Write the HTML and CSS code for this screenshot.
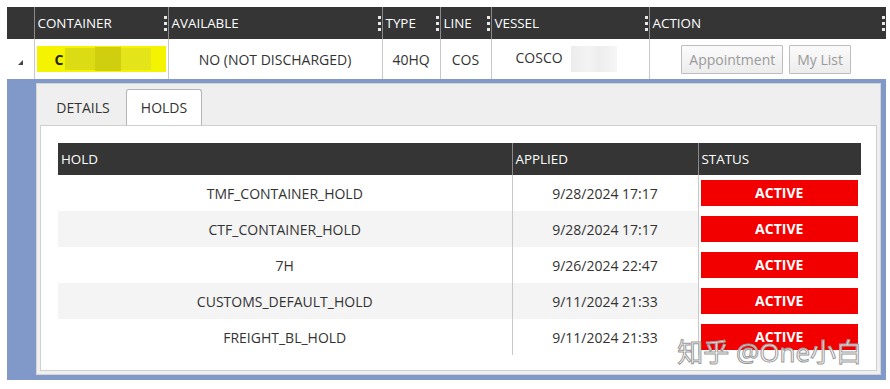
FILE: index.html
```html
<!DOCTYPE html>
<html>
<head>
<meta charset="utf-8">
<link rel="stylesheet" href="styles.css">
</head>
<body>
<table class="grid">
  <colgroup>
    <col class="c-exp"><col class="c-cont"><col class="c-avail"><col class="c-type"><col class="c-line"><col class="c-vessel"><col class="c-action">
  </colgroup>
  <thead>
    <tr>
      <th class="hx"></th>
      <th><div class="hc"><span>CONTAINER</span><span class="grip"></span></div></th>
      <th><div class="hc"><span>AVAILABLE</span><span class="grip"></span></div></th>
      <th><div class="hc"><span>TYPE</span><span class="grip"></span></div></th>
      <th><div class="hc"><span>LINE</span><span class="grip"></span></div></th>
      <th><div class="hc"><span>VESSEL</span><span class="grip"></span></div></th>
      <th><div class="hc"><span>ACTION</span><span class="grip"></span></div></th>
    </tr>
  </thead>
  <tbody>
    <tr class="data">
      <td class="exp"><span class="tri"></span></td>
      <td class="cont"><div class="hl"><span class="hl-c">C</span><span class="blur b1"></span><span class="blur b2"></span><span class="blur b3"></span></div></td>
      <td>NO (NOT DISCHARGED)</td>
      <td>40HQ</td>
      <td>COS</td>
      <td class="vessel"><span>COSCO</span><span class="gblur"></span></td>
      <td class="act"><button class="btn">Appointment</button><button class="btn">My List</button></td>
    </tr>
    <tr class="detail">
      <td colspan="7" class="detail-cell">
        <div class="panel">
          <div class="tabs">
            <div class="tab">DETAILS</div>
            <div class="tab active">HOLDS</div>
          </div>
          <div class="content">
            <table class="holds">
              <colgroup><col class="h-hold"><col class="h-app"><col class="h-stat"></colgroup>
              <thead>
                <tr><th>HOLD</th><th>APPLIED</th><th>STATUS</th></tr>
              </thead>
              <tbody>
                <tr><td>TMF_CONTAINER_HOLD</td><td class="date">9/28/2024 17:17</td><td class="st"><span class="badge">ACTIVE</span></td></tr>
                <tr class="alt"><td>CTF_CONTAINER_HOLD</td><td class="date">9/28/2024 17:17</td><td class="st"><span class="badge">ACTIVE</span></td></tr>
                <tr><td>7H</td><td class="date">9/26/2024 22:47</td><td class="st"><span class="badge">ACTIVE</span></td></tr>
                <tr class="alt"><td>CUSTOMS_DEFAULT_HOLD</td><td class="date">9/11/2024 21:33</td><td class="st"><span class="badge">ACTIVE</span></td></tr>
                <tr><td>FREIGHT_BL_HOLD</td><td class="date">9/11/2024 21:33</td><td class="st"><span class="badge">ACTIVE</span></td></tr>
              </tbody>
            </table>
            <div class="watermark">知乎 @One小白</div>
          </div>
        </div>
      </td>
    </tr>
  </tbody>
</table>
</body>
</html>
```

FILE: styles.css
```css
html, body { background: #fff; }
body {
  margin: 7px 4px 0 7px;
  font-family: "Open Sans", "Noto Sans", "Noto Sans CJK SC", sans-serif;
  font-size: 14px;
  color: #333;
}
.grid {
  border-collapse: collapse;
  table-layout: fixed;
  width: 879px;
}
.c-exp { width: 27px; }
.c-cont { width: 134px; }
.c-avail { width: 214px; }
.c-type { width: 58px; }
.c-line { width: 51px; }
.c-vessel { width: 158px; }
.c-action { width: 237px; }

.grid thead th {
  background: #353535;
  color: #fff;
  font-weight: normal;
  font-size: 13.4px;
  text-align: left;
  height: 32px;
  padding: 0 0 0 3px;
  border-left: 1px solid #8a8a8a;
}
.grid thead th.hx { border-left: none; }
.hc {
  display: flex;
  align-items: center;
  justify-content: space-between;
}
.grip {
  width: 3px;
  height: 3px;
  background: #e8e8e8;
  box-shadow: 0 -6px 0 #e8e8e8, 0 6px 0 #e8e8e8;
  margin-right: 1px;
}
.grid tr.data td {
  height: 40px;
  padding: 0;
  text-align: center;
  border-left: 1px solid #c8c8c8;
  color: #333;
}
.grid tr.data td.exp { border-left: none; }
.tri {
  display: inline-block;
  width: 0; height: 0;
  border-left: 5px solid transparent;
  border-bottom: 5px solid #444;
  margin-top: 6px;
}
.grid tr.data td.cont { text-align: left; padding-left: 2px; }
.hl {
  width: 129px;
  height: 26px;
  background: #f4f400;
  display: flex;
  align-items: center;
  overflow: hidden;
}
.hl-c { color: #222; font-weight: bold; margin-left: 18px; font-size: 14px; }
.blur { display: block; }
.b1 { width: 30px; background: #dcdc14; margin-left: 2px; height: 22px; }
.b2 { width: 26px; background: #cfcf10; height: 24px; }
.b3 { width: 30px; background: #e4e41a; height: 22px; }
.vessel { text-align: left !important; padding-left: 24px !important; }
.gblur {
  display: inline-block;
  vertical-align: middle;
  width: 46px;
  height: 26px;
  margin-left: 8px;
  background: linear-gradient(90deg, #ececec 0%, #f4f4f4 40%, #ededed 60%, #f6f6f6 100%);
}
.act { text-align: right !important; padding-right: 35px !important; }
.btn {
  font-family: inherit;
  font-size: 14px;
  color: #9a9a9a;
  background: linear-gradient(#fbfbfb, #ececec);
  border: 1px solid #bdbdbd;
  height: 29px;
  padding: 0 7px;
  margin-left: 6px;
  border-radius: 1px;
}
.detail-cell {
  background: #8199c8;
  padding: 4px 5px 5px 29px;
}
.panel {
  background: #efefef;
  border: 1px solid #d5d5d5;
  padding: 5px 3px 3px 3px;
}
.tabs { display: flex; height: 36px; }
.tab {
  width: 86px;
  text-align: center;
  line-height: 38px;
  font-size: 14px;
  color: #333;
}
.tab.active {
  width: 74px;
  line-height: 36px;
  background: #fff;
  border: 1px solid #b4b4b4;
  border-bottom: none;
  border-radius: 3px 3px 0 0;
}
.content {
  position: relative;
  background: #fff;
  border: 1px solid #cfcfcf;
  padding: 17px 15px 15px 17px;
}
.holds {
  border-collapse: collapse;
  table-layout: fixed;
  width: 803px;
}
.h-hold { width: 454px; }
.h-app { width: 186px; }
.h-stat { width: 163px; }
.holds th {
  background: #353535;
  color: #fff;
  font-weight: normal;
  text-align: left;
  height: 31px;
  padding: 0 0 0 4px;
  border-left: 1px solid #8a8a8a;
}
.holds th:first-child { border-left: none; }
.holds td {
  height: 36px;
  padding: 0;
  text-align: center;
  border-left: 1px solid #c8c8c8;
  color: #333;
}
.holds td:first-child { border-left: none; }
.holds tr.alt td { background: #f4f4f4; }
.holds tr.alt td.st { background: #fff; }
.holds td.st { padding: 0 3px 0 2px; }
.badge {
  display: block;
  background: #f20000;
  color: #fff;
  font-weight: bold;
  height: 26px;
  line-height: 26px;
  text-align: center;
}
.watermark {
  position: absolute;
  right: 14px;
  bottom: 3px;
  font-size: 26px;
  line-height: 30px;
  color: rgba(255,255,255,0.85);
  -webkit-text-stroke: 1px #9a9a9a;
}
```
